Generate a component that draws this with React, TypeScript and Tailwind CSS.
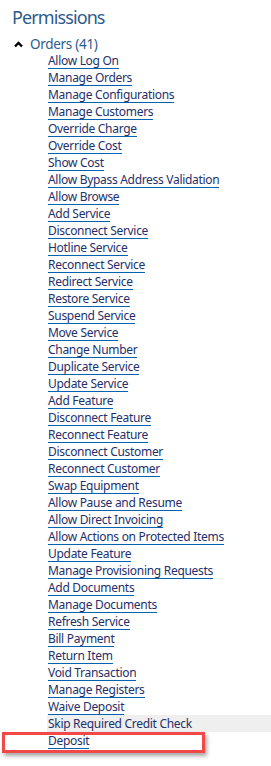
const items = [
  'Allow Log On',
  'Manage Orders',
  'Manage Configurations',
  'Manage Customers',
  'Override Charge',
  'Override Cost',
  'Show Cost',
  'Allow Bypass Address Validation',
  'Allow Browse',
  'Add Service',
  'Disconnect Service',
  'Hotline Service',
  'Reconnect Service',
  'Redirect Service',
  'Restore Service',
  'Suspend Service',
  'Move Service',
  'Change Number',
  'Duplicate Service',
  'Update Service',
  'Add Feature',
  'Disconnect Feature',
  'Reconnect Feature',
  'Disconnect Customer',
  'Reconnect Customer',
  'Swap Equipment',
  'Allow Pause and Resume',
  'Allow Direct Invoicing',
  'Allow Actions on Protected Items',
  'Update Feature',
  'Manage Provisioning Requests',
  'Add Documents',
  'Manage Documents',
  'Refresh Service',
  'Bill Payment',
  'Return Item',
  'Void Transaction',
  'Manage Registers',
  'Waive Deposit',
  'Skip Required Credit Check',
  'Deposit',
]

function PermissionLink({ label }: { label: string }) {
  return (
    <a
      href="#"
      className="inline-block leading-[15px] border-b-[1.5px] border-[#0063b1] text-[#24306b]"
    >
      {label}
    </a>
  )
}

export default function App() {
  return (
    <div
      className="w-[271px] h-[766px] bg-white overflow-hidden"
      style={{ fontFamily: '"Noto Sans", "Open Sans", sans-serif' }}
    >
      <h2 className="pl-[12px] pt-[4px] text-[18px] leading-[26px] tracking-[-0.9px] text-[#2d5b8c]">
        Permissions
      </h2>

      <div className="flex items-center h-[16px] mt-[6px] pl-[14px]">
        <svg width="9" height="7" viewBox="0 0 9 7" className="mt-[1px]">
          <polyline points="1,5.5 4.5,2 8,5.5" fill="none" stroke="#000" strokeWidth="2.4" />
        </svg>
        <span className="ml-[7px] text-[13.5px] tracking-[-0.3px] text-[#2d5b8c]">Orders (41)</span>
      </div>

      <ul className="text-[12px] tracking-[-0.3px]">
        {items.map((label) => {
          if (label === 'Skip Required Credit Check') {
            return (
              <li key={label} className="h-[17px] ml-[47px] pl-[1px] bg-[#efefef] text-[#24306b] leading-[17px]">
                {label}
              </li>
            )
          }
          if (label === 'Deposit') {
            return (
              <li key={label} className="relative h-[17px] pl-[48px]">
                <PermissionLink label={label} />
                <div className="absolute left-[2px] top-[0px] w-[203px] h-[21px] border-[3px] border-[#f24848] shadow-[2px_3px_4px_rgba(0,0,0,0.35)]" />
              </li>
            )
          }
          return (
            <li key={label} className="h-[17px] pl-[48px]">
              <PermissionLink label={label} />
            </li>
          )
        })}
      </ul>
    </div>
  )
}
